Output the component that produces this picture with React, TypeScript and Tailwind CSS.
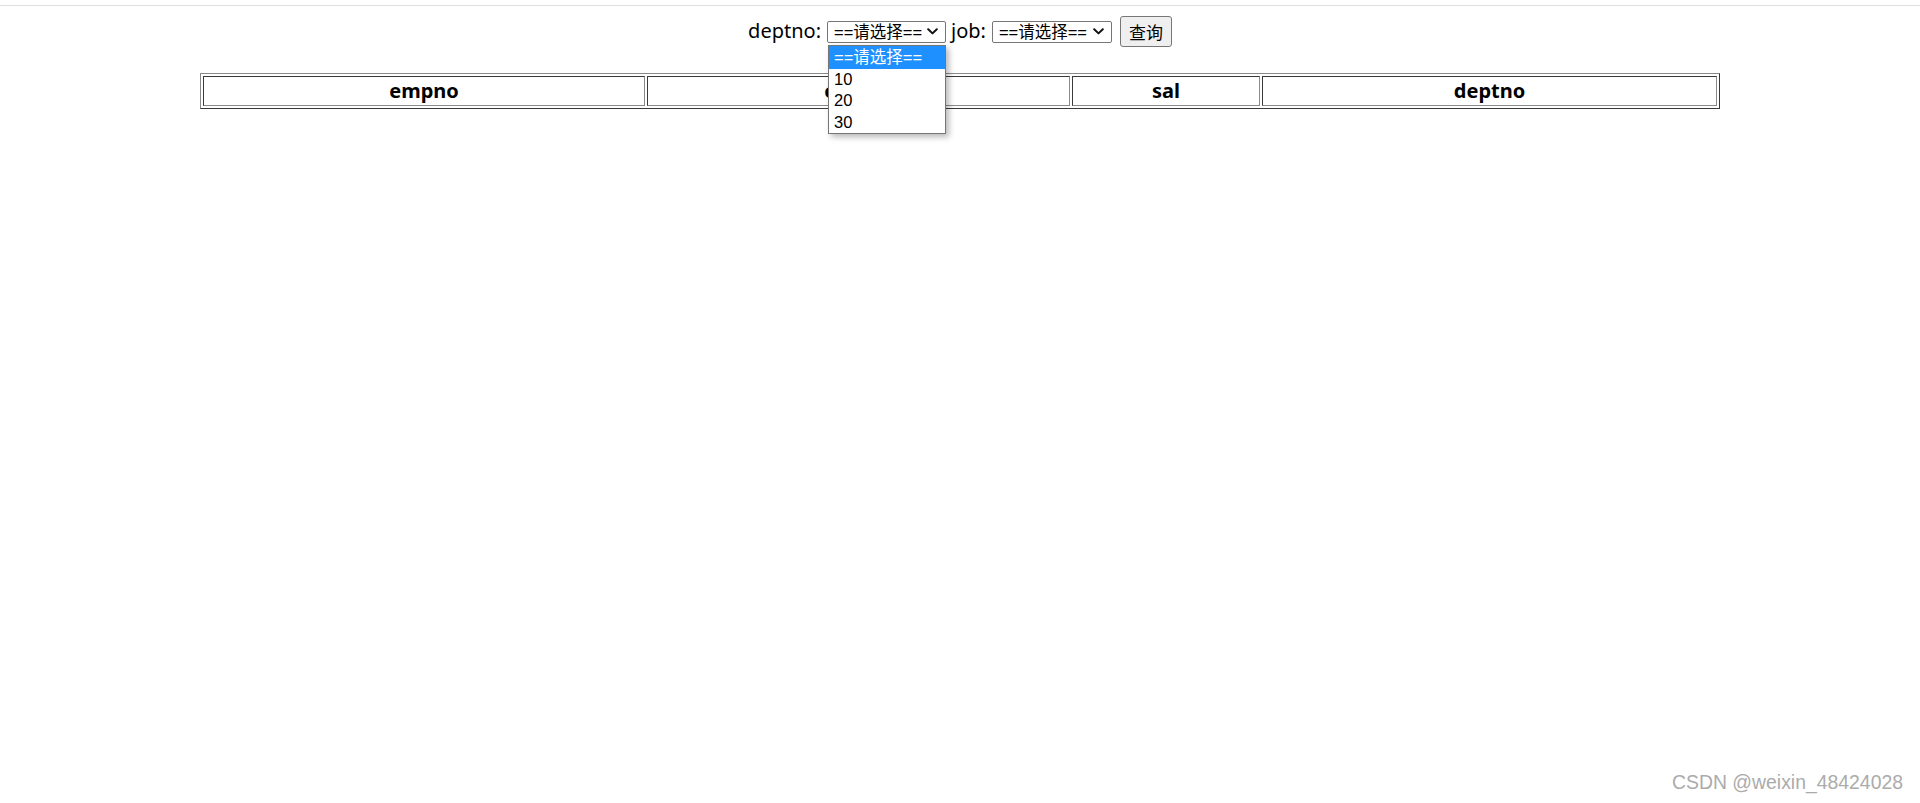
import React from "react";

const Chevron = () => (
  <svg width="11" height="7" viewBox="0 0 11 7" className="shrink-0">
    <path d="M1.2 1.2 L5.5 5.4 L9.8 1.2" fill="none" stroke="#111" strokeWidth="2" strokeLinecap="round" strokeLinejoin="round" />
  </svg>
);

const FakeSelect = ({ width, children }: { width: string; children?: React.ReactNode }) => (
  <div className={`relative ${width}`}>
    <div className="flex h-[22px] items-center justify-between rounded-[2px] border border-[#767676] bg-white pl-[6px] pr-[7px] text-[16.5px] leading-[20px] text-black [font-family:'Liberation_Sans','Noto_Sans_CJK_SC',sans-serif]">
      <span>==请选择==</span>
      <Chevron />
    </div>
    {children}
  </div>
);

export default function App() {
  const th =
    "border border-t-[#3a3a3a] border-l-[#3a3a3a] border-r-[#8a8a8a] border-b-[#8a8a8a] p-[1px] text-center text-[20px] font-bold leading-[26px] text-black";
  return (
    <div className="relative min-h-[803px] w-full overflow-hidden bg-white [font-family:'Noto_Sans','Noto_Sans_CJK_SC',sans-serif]">
      <div className="mt-[5px] h-px w-full bg-[#dedede]" />

      <div className="mt-[10px] flex h-[31px] items-center justify-center text-[20px] text-black">
        <span className="leading-[27px] -mt-[2px]">deptno:</span>
        <div className="ml-[6px]">
          <FakeSelect width="w-[119px]">
            <div className="absolute left-[1px] top-[24px] z-10 w-[118px] border border-[#767676] bg-white shadow-[3px_3px_6px_rgba(0,0,0,0.28)] text-[16.5px] leading-[21.5px] [font-family:'Liberation_Sans','Noto_Sans_CJK_SC',sans-serif]">
              <div className="bg-[#1e90ff] pl-[5px] text-white h-[23px] leading-[23px]">==请选择==</div>
              <div className="pl-[5px] text-black">10</div>
              <div className="pl-[5px] text-black">20</div>
              <div className="pl-[5px] text-black">30</div>
            </div>
          </FakeSelect>
        </div>
        <span className="ml-[5px] leading-[27px] -mt-[2px]">job:</span>
        <div className="ml-[6px]">
          <FakeSelect width="w-[120px]" />
        </div>
        <button className="ml-[8px] h-[31px] w-[52px] rounded-[3px] border border-[#767676] bg-[#efefef] text-[17px] leading-[20px] text-black [font-family:'Noto_Sans_CJK_SC',sans-serif]">
          查询
        </button>
      </div>

      <table className="mx-auto mt-[26px] w-[1520px] border-separate border-spacing-[2px] border border-t-[#8a8a8a] border-l-[#8a8a8a] border-r-[#3a3a3a] border-b-[#3a3a3a]">
        <thead>
          <tr>
            <th className={`${th} w-[442px]`}>empno</th>
            <th className={`${th} w-[423px]`}>ename</th>
            <th className={`${th} w-[188px]`}>sal</th>
            <th className={th}>deptno</th>
          </tr>
        </thead>
      </table>

      <div className="absolute right-[17px] top-[771px] text-[19.4px] leading-[22px] text-[#ababab] [font-family:'Liberation_Sans',sans-serif]">
        CSDN @weixin_48424028
      </div>
    </div>
  );
}
